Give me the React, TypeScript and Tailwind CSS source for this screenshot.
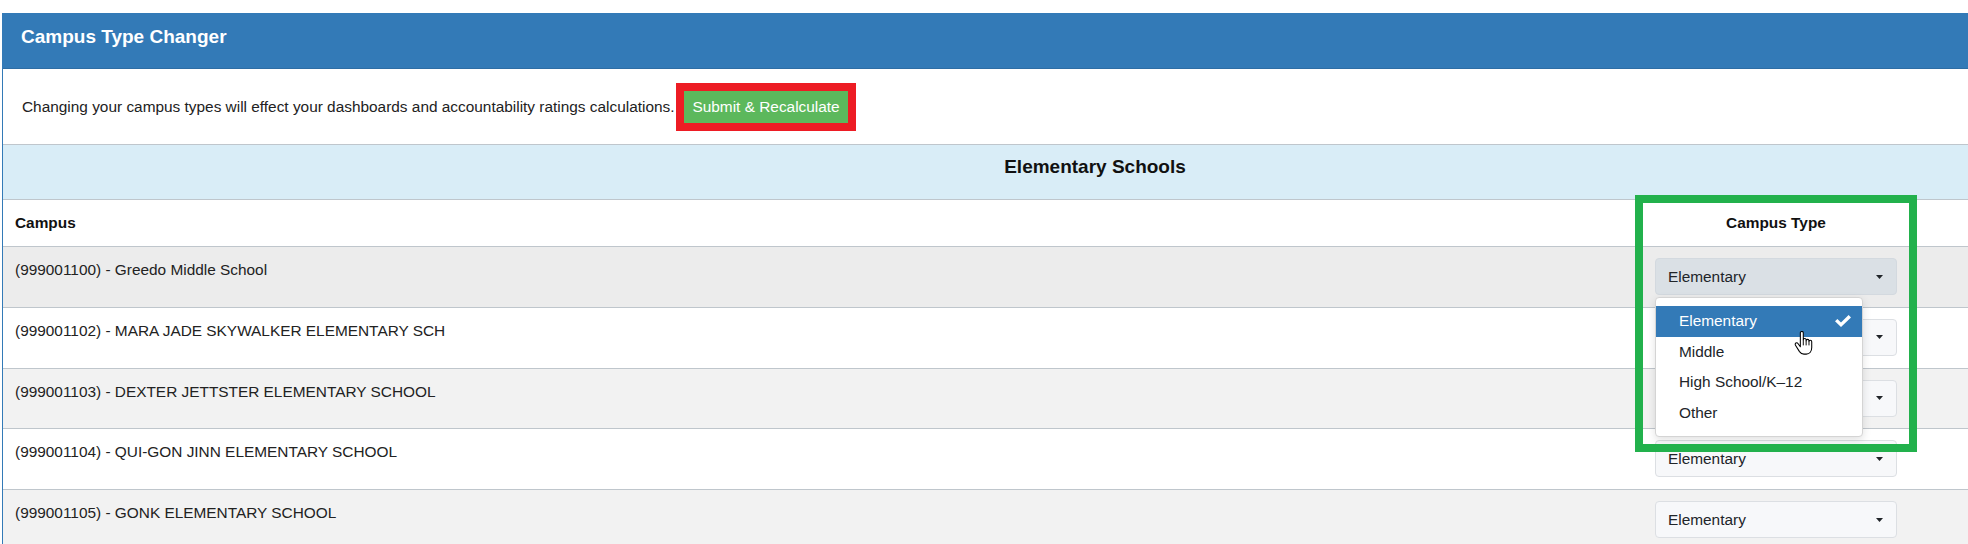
import React from "react";

type Row = { label: string; bg: string; open?: boolean };

const rows: Row[] = [
  { label: "(999001100) - Greedo Middle School", bg: "bg-[#ececec]", open: true },
  { label: "(999001102) - MARA JADE SKYWALKER ELEMENTARY SCH", bg: "bg-white" },
  { label: "(999001103) - DEXTER JETTSTER ELEMENTARY SCHOOL", bg: "bg-[#f2f2f2]" },
  { label: "(999001104) - QUI-GON JINN ELEMENTARY SCHOOL", bg: "bg-white" },
  { label: "(999001105) - GONK ELEMENTARY SCHOOL", bg: "bg-[#f2f2f2]" },
];

function Caret() {
  return (
    <svg width="7" height="4" viewBox="0 0 7 4" className="shrink-0">
      <polygon points="0,0 7,0 3.5,4" fill="#212529" />
    </svg>
  );
}

function Check() {
  return (
    <svg width="16" height="12" viewBox="0 0 16 12">
      <path d="M0 6.3 L2.4 3.9 L6 7.4 L13.6 0 L16 2.4 L6 12 Z" fill="#ffffff" />
    </svg>
  );
}

function HandCursor() {
  return (
    <svg width="19" height="24" viewBox="0 0 18 22.5">
      <path
        d="M6 1.6 C6 0.8 6.6 0.3 7.4 0.3 C8.2 0.3 8.8 0.8 8.8 1.6 V8.2 C8.8 7.4 9.4 6.9 10.1 6.9 C10.9 6.9 11.5 7.4 11.5 8.2 V9 C11.5 8.2 12.1 7.8 12.8 7.8 C13.6 7.8 14.2 8.3 14.2 9.1 V9.8 C14.2 9.1 14.8 8.7 15.5 8.7 C16.2 8.7 16.8 9.2 16.8 10 V15.6 C16.8 19 14.9 21.8 11.6 21.8 H9.4 C7.4 21.8 6.2 20.8 5.2 19.4 L1.4 13.4 C0.9 12.6 1.1 11.7 1.8 11.3 C2.5 10.9 3.4 11.2 3.9 11.9 L6 14.8 Z"
        fill="#ffffff"
        stroke="#000000"
        strokeWidth="1"
        strokeLinejoin="round"
      />
      <path d="M8.8 8.2 V13.5 M11.5 9 V13.5 M14.2 9.8 V13.5" stroke="#000000" strokeWidth="0.9" fill="none" />
    </svg>
  );
}

function Dropdown() {
  const items = ["Elementary", "Middle", "High School/K\u201312", "Other"];
  return (
    <div className="absolute left-0 top-[39px] z-20 w-[208px] rounded-[4px] border border-[#d4d4d4] bg-white py-[8px] shadow-[0_3px_8px_rgba(0,0,0,0.12)]">
      {items.map((it, i) => (
        <div
          key={it}
          className={
            i === 0
              ? "flex h-[30.5px] items-center justify-between bg-[#337ab7] pl-[23px] pr-[11px] text-white"
              : "flex h-[30.5px] items-center pl-[23px] pr-[11px] text-[#212529]"
          }
        >
          <span>{it}</span>
          {i === 0 && <Check />}
        </div>
      ))}
      <div className="absolute left-[138px] top-[33px] z-30">
        <HandCursor />
      </div>
    </div>
  );
}

function Select({ open }: { open?: boolean }) {
  return (
    <div className="relative">
      <div
        className={
          open
            ? "flex h-[37px] items-center justify-between rounded-[4px] border border-[#d3d9df] bg-[#dae0e5] pl-[12px] pr-[13px] text-[#212529]"
            : "flex h-[37px] items-center justify-between rounded-[4px] border border-[#dcdfe3] bg-[#f7f8fa] pl-[12px] pr-[13px] text-[#212529]"
        }
      >
        <span>Elementary</span>
        <Caret />
      </div>
      {open && <Dropdown />}
    </div>
  );
}

export default function App() {
  return (
    <div className="h-[544px] w-[1968px] overflow-hidden bg-white pl-[2px] pt-[13px] font-['Liberation_Sans',Arial,sans-serif] text-[15.4px] text-[#222]">
      <div className="w-[2186px] border border-[#337ab7] bg-white">
        <div className="h-[55px] border-b border-[#2e6da4] bg-[#337ab7] px-[18px] pt-[12px] text-[19px] font-bold leading-[22px] text-white">
          Campus Type Changer
        </div>
        <div className="flex h-[75px] items-center px-[19px]">
          <span>Changing your campus types will effect your dashboards and accountability ratings calculations.</span>
          <button className="ml-[10px] mt-[1px] h-[32px] bg-[#5cb85c] px-[8px] text-[15.4px] text-white ring-8 ring-[#ed1c24]">
            Submit &amp; Recalculate
          </button>
        </div>
        <div className="h-[55px] border-t border-[#bfc6cc] bg-[#d9edf7] pt-[11px] text-center text-[19px] font-bold leading-[22px] text-[#111]">
          Elementary Schools
        </div>
        <div className="flex h-[47px] border-t border-[#bfc6cc] bg-white font-bold leading-[22px] text-[#111]">
          <div className="w-[1640px] pl-[12px] pt-[12px]">Campus</div>
          <div className="relative w-[266px] pt-[12px] text-center">
            Campus Type
            <div className="pointer-events-none absolute left-[-8px] top-[-5px] z-40 h-[257px] w-[282px] border-8 border-[#22b14c]" />
          </div>
          <div className="flex-1" />
        </div>
        {rows.map((r) => (
          <div key={r.label} className={`flex border-t border-[#bfc6cc] leading-[22px] ${r.bg}`}>
            <div className="w-[1640px] pl-[12px] pt-[12px]">{r.label}</div>
            <div className="w-[266px] px-[12px] pb-[11.75px] pt-[11px]">
              <Select open={r.open} />
            </div>
            <div className="flex-1" />
          </div>
        ))}
      </div>
    </div>
  );
}
